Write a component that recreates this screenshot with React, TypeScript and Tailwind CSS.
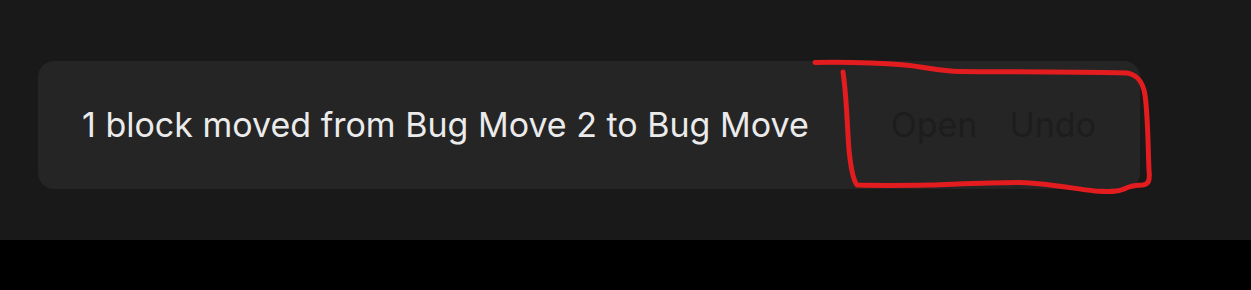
import React from 'react';

export default function App() {
  return (
    <div className="relative w-[1251px] h-[290px] bg-black" style={{ fontFamily: 'Inter, "Noto Sans", sans-serif' }}>
      <div className="h-[240px] bg-[#191919] pt-[61px] pl-[38px]">
        <div className="w-[1102px] h-[128px] rounded-2xl bg-[#252525] flex items-center pl-[44px]">
          <span className="text-[34px] leading-none text-[#ebebeb]">
            1 block moved from Bug Move 2 to Bug Move
          </span>
          <div className="flex items-center gap-[32px] ml-[82px]">
            <button className="text-[34px] leading-none text-[#1d1d1d]">Open</button>
            <button className="text-[34px] leading-none text-[#1d1d1d]">Undo</button>
          </div>
        </div>
      </div>

      {/* hand-drawn red annotation */}
      <svg className="absolute inset-0 pointer-events-none" width="1251" height="290" viewBox="0 0 1251 290">
        <path
          d="M815 62.5 C 850 62, 880 63, 905 65 C 925 67, 940 71, 960 71.5 C 1000 72, 1060 71.5, 1127 73 C 1138 75, 1143 82, 1145 95 C 1148 115, 1148 150, 1149 170 C 1150 180, 1149 184, 1143 185 C 1135 185, 1130 186, 1124 189 C 1118 192, 1110 192, 1095 191 C 1070 188, 1045 183, 1020 182.5 C 990 182.5, 960 184, 930 185 C 900 185.5, 875 185.5, 857 185 C 853 180, 851 170, 849 150 C 847 125, 847 100, 843 72"
          fill="none"
          stroke="#e31c1f"
          strokeWidth="5"
          strokeLinecap="round"
          strokeLinejoin="round"
        />
      </svg>
    </div>
  );
}
